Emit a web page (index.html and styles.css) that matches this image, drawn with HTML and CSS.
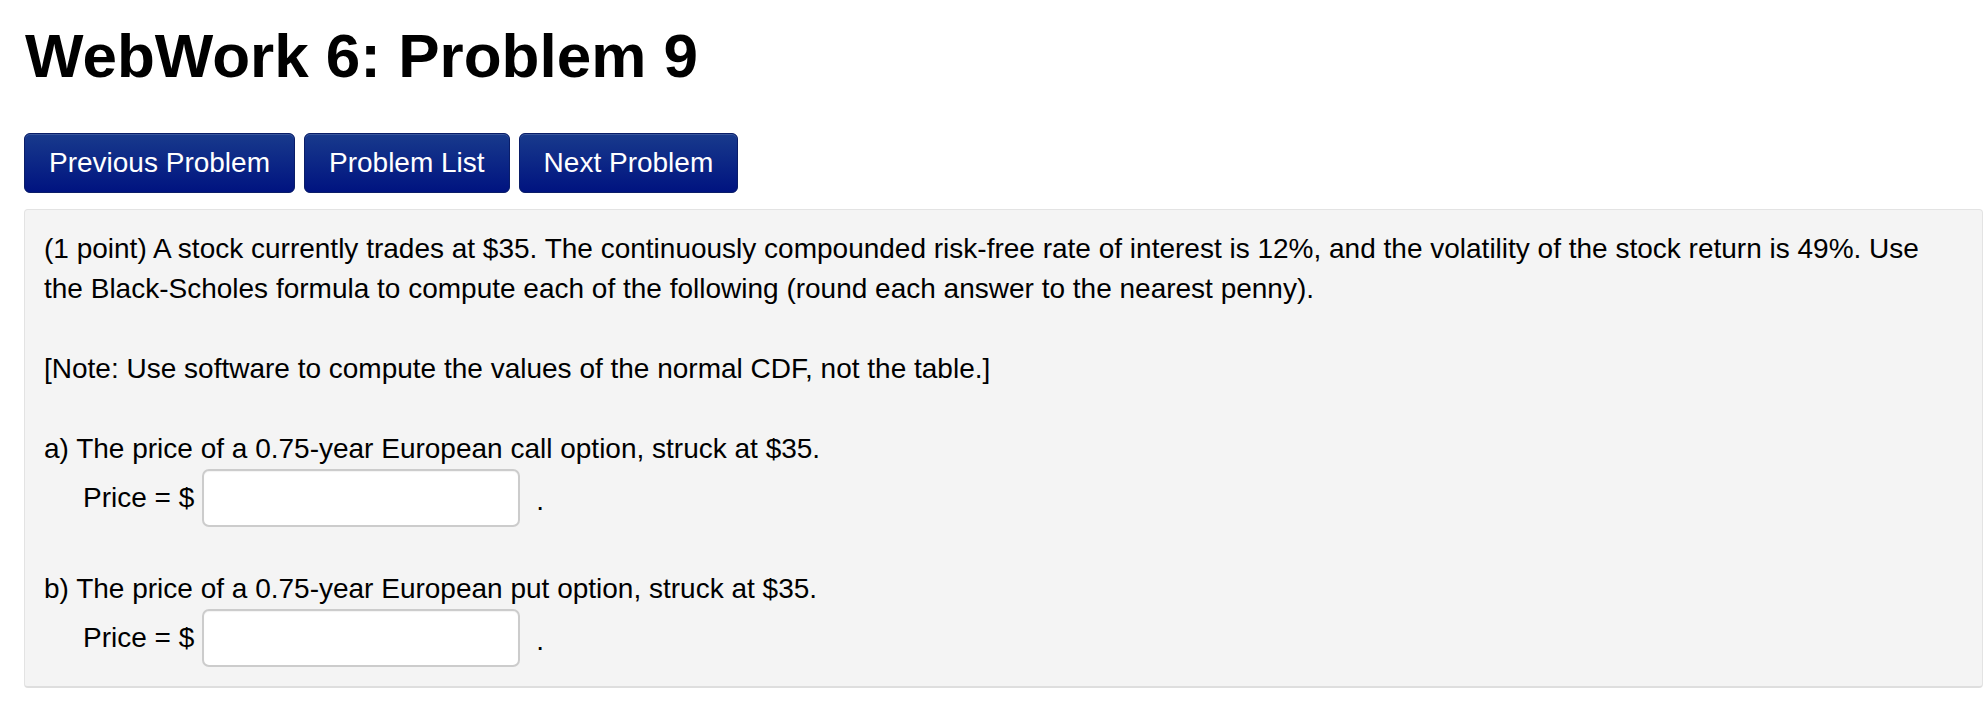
FILE: index.html
```html
<!DOCTYPE html>
<html lang="en">
<head>
    <meta charset="UTF-8">
    <title>WebWork 6: Problem 9</title>
    <link rel="stylesheet" href="styles.css">
</head>
<body>
    <div class="page">
        <h1 class="title">WebWork 6: Problem 9</h1>
        <div class="nav-buttons">
            <button class="nav-btn">Previous Problem</button>
            <button class="nav-btn">Problem List</button>
            <button class="nav-btn">Next Problem</button>
        </div>
        <div class="problem">
            <p class="text">(1 point) A stock currently trades at $35. The continuously compounded risk-free rate of interest is 12%, and the volatility of the stock return is 49%. Use the Black-Scholes formula to compute each of the following (round each answer to the nearest penny).</p>
            <p class="text">[Note: Use software to compute the values of the normal CDF, not the table.]</p>
            <div class="part">
                <div class="text">a) The price of a 0.75-year European call option, struck at $35.</div>
                <div class="answer-row">
                    <span class="label">Price = $</span>
                    <input type="text" class="answer">
                    <span class="dot">.</span>
                </div>
            </div>
            <div class="part">
                <div class="text">b) The price of a 0.75-year European put option, struck at $35.</div>
                <div class="answer-row">
                    <span class="label">Price = $</span>
                    <input type="text" class="answer">
                    <span class="dot">.</span>
                </div>
            </div>
        </div>
    </div>
</body>
</html>
```

FILE: styles.css
```css
body {
    margin: 0;
    background-color: #ffffff;
    color: #000000;
    font-family: "Liberation Sans", Arial, Helvetica, sans-serif;
}
.page {
    padding: 22px 1px 0 24px;
}
.title {
    margin: 0 0 43px 1px;
    font-size: 62px;
    line-height: 68px;
    font-weight: bold;
}
.nav-buttons {
    display: flex;
    gap: 9px;
    margin-bottom: 16px;
}
.nav-btn {
    height: 60px;
    padding: 0 24px;
    font-family: inherit;
    font-size: 28px;
    color: #ffffff;
    background-color: #0a2a86;
    background-image: linear-gradient(#183a8c, #001380);
    border: 1px solid #0a1d68;
    border-radius: 6px;
    box-shadow: inset 0 1px 0 rgba(255, 255, 255, 0.15);
    cursor: pointer;
}
.problem {
    background-color: #f4f4f4;
    border: 1px solid #e3e3e3;
    border-bottom: 2px solid #dedede;
    border-radius: 4px;
    padding: 19px;
    font-size: 28px;
    line-height: 40px;
}
.text {
    margin: 0 0 40px 0;
}
.part .text {
    margin: 0;
}
.part + .part {
    margin-top: 42px;
}
.answer-row {
    display: flex;
    align-items: center;
    padding-left: 39px;
    height: 58px;
}
.answer {
    box-sizing: border-box;
    width: 318px;
    height: 58px;
    margin-left: 8px;
    background-color: #ffffff;
    border: 2px solid #cccccc;
    border-radius: 7px;
    box-shadow: inset 0 1px 1px rgba(0, 0, 0, 0.05);
    font-size: 28px;
    outline: none;
}
.dot {
    margin-left: 16px;
    padding-top: 6px;
}
```
